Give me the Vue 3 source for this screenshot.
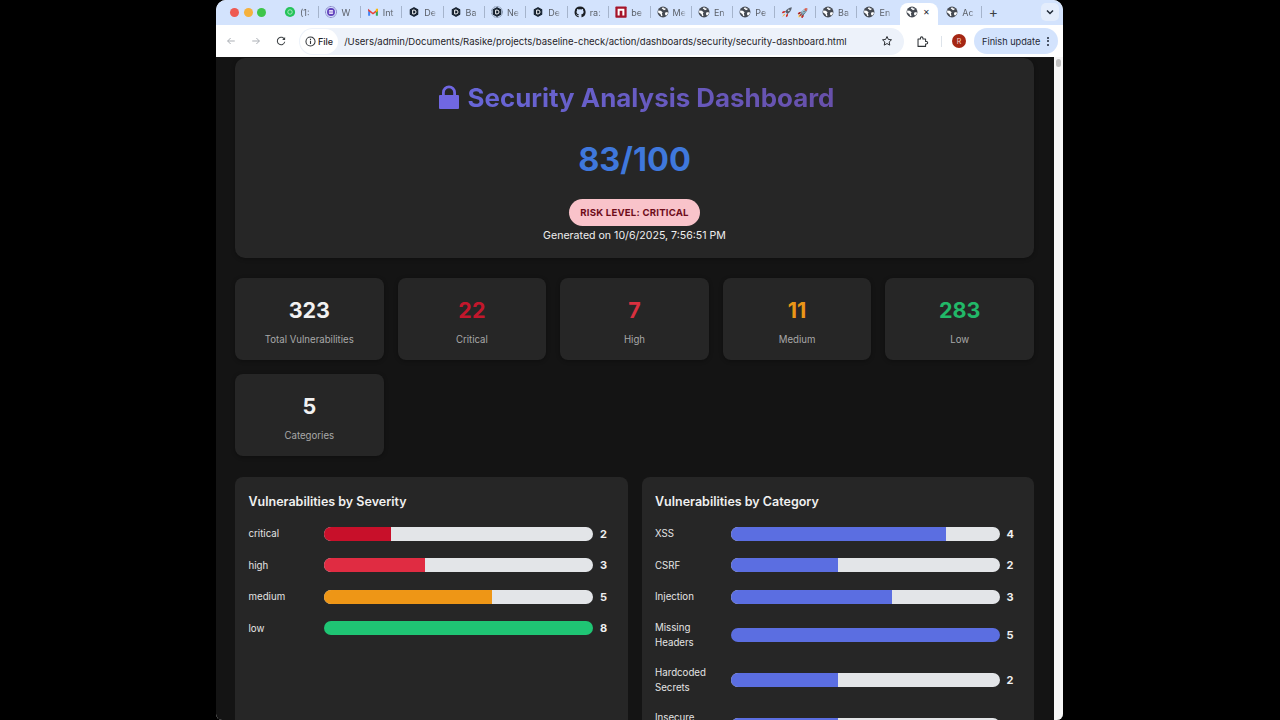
<template>
  <div class="screen">
    <div class="window">
      <!-- Tab strip -->
      <div class="tabstrip">
        <div class="lights">
          <span class="light light--red"></span>
          <span class="light light--yellow"></span>
          <span class="light light--green"></span>
        </div>
        <div class="tabs">
          <div v-for="(tab, i) in tabs" :key="i" class="tab" :class="{ 'tab--active': tab.active }">
            <svg class="favicon" viewBox="0 0 16 16">
              <template v-if="tab.icon === 'whatsapp'">
                <circle cx="8" cy="8" r="6.8" fill="#25c35a" />
                <circle cx="8" cy="8" r="3" fill="none" stroke="#c8f2d6" stroke-width="1" />
              </template>
              <template v-else-if="tab.icon === 'purple'">
                <circle cx="8" cy="8" r="7.300" fill="none" stroke="#4d3a9c" stroke-width="1" stroke-dasharray="1.200 0.700" />
                <circle cx="8" cy="8" r="5.300" fill="#5f3fbb" />
                <rect x="5.200" y="5.200" width="5.600" height="5.600" rx="1" fill="#e4dcf8" />
                <path d="M5.200 8h5.600" stroke="#5f3fbb" stroke-width="0.800" />
              </template>
              <template v-else-if="tab.icon === 'gmail'">
                <path d="M1.500 3.500v9.500h2.700V7.200z" fill="#4285f4" />
                <path d="M14.500 3.500v9.500h-2.700V7.200z" fill="#34a853" />
                <path d="M1.500 3.500L8 9l6.500-5.500v3L8 11.400 1.500 6.500z" fill="#ea4335" />
                <path d="M11.800 3.600l2.700-.1v3l-2.700 2z" fill="#fbbc04" />
              </template>
              <template v-else-if="tab.icon === 'dark' || tab.icon === 'darkring'">
                <circle v-if="tab.icon === 'darkring'" cx="8" cy="8" r="7.400" fill="none" stroke="#44546a" stroke-width="0.900" stroke-dasharray="1.200 0.800" />
                <path d="M8 2.200L13 5v6l-5 2.800L3 11V5z" fill="#14202e" stroke="#14202e" stroke-width="1.400" stroke-linejoin="round" />
                <path d="M6.200 5.400h1.900a2.600 2.600 0 010 5.200H6.200z" fill="none" stroke="#fff" stroke-width="1.300" />
              </template>
              <template v-else-if="tab.icon === 'github'">
                <path d="M8 .8a7.300 7.300 0 00-2.300 14.200c.4.100.5-.2.5-.4v-1.300c-2 .4-2.500-.9-2.500-.9-.3-.8-.8-1.100-.8-1.100-.7-.4 0-.4 0-.4.700 0 1.100.8 1.100.8.700 1.100 1.700.8 2.200.6 0-.5.300-.8.500-1-1.600-.2-3.300-.8-3.300-3.600 0-.8.300-1.400.8-1.900-.1-.2-.4-.9.100-1.900 0 0 .6-.2 2 .7a7 7 0 013.600 0c1.400-.9 2-.7 2-.7.400 1 .2 1.700.1 1.900.5.500.8 1.100.8 1.900 0 2.800-1.700 3.400-3.300 3.600.3.200.5.700.5 1.300v2c0 .2.100.5.5.4A7.300 7.300 0 008 .8z" fill="#1b1f24" />
              </template>
              <template v-else-if="tab.icon === 'red'">
                <rect x="0.500" y="0.500" width="15" height="15" rx="1" fill="#a5142a" />
                <path d="M3.500 12.500v-9h9v9H9.800V6.200H6.200v6.300z" fill="#fff" />
              </template>
              <template v-else-if="tab.icon === 'rocket'">
                <path d="M14.500 1.500C10.500 2 7.500 4 5.500 7.500l3 3c3.500-2 5.500-5 6-9z" fill="#59606b" />
                <circle cx="10.300" cy="5.700" r="1.200" fill="#d9dee5" />
                <path d="M6 6.500l-3.500.5L1 9.500l3.500-.3zM9.500 10L9 13.500 6.500 15l.3-3.500z" fill="#cf2f2a" />
                <path d="M4.200 10.300L1.500 14.500l4.200-2.700z" fill="#f2b13c" />
              </template>
              <template v-else>
                <circle cx="8" cy="8" r="7.300" fill="#454a52" />
                <path d="M1.500 6l3.500.3 2.500 2-1 1.700.8 3-1.500.7-1.300-3L1.500 8.500zM8.200 1.200l.8 1.800 2.300.2.200 1.500-2.200 1L7.800 4.300 6.200 3.300zM11 8.800l3-.8.600 2-2.500 3-1.500-2z" fill="#fff" />
              </template>
            </svg>
            <span v-if="tab.label" class="tab__label">{{ tab.label }}</span>
            <span v-if="tab.active" class="tab__close">✕</span>
          </div>
          <span class="tab-plus">+</span>
        </div>
        <div class="tab-menu">
          <svg viewBox="0 0 10 10" width="10" height="10"><path d="M2 3.500l3 3 3-3" fill="none" stroke="#1f2937" stroke-width="1.500" /></svg>
        </div>
      </div>

      <!-- Toolbar -->
      <div class="toolbar">
        <svg class="nav-icon" viewBox="0 0 16 16"><path d="M13 8H3.500M7.500 4l-4 4 4 4" fill="none" stroke="#a9adb3" stroke-width="1.300" /></svg>
        <svg class="nav-icon" viewBox="0 0 16 16"><path d="M3 8h9.500M8.500 4l4 4-4 4" fill="none" stroke="#a9adb3" stroke-width="1.300" /></svg>
        <svg class="nav-icon nav-icon--reload" viewBox="0 0 16 16"><path d="M12.800 6.200A5 5 0 1013 9" fill="none" stroke="#3c4043" stroke-width="1.400" /><path d="M13.500 2.800v4h-4z" fill="#3c4043" /></svg>
        <div class="omnibox">
          <div class="chip">
            <svg viewBox="0 0 14 14" width="11" height="11"><circle cx="7" cy="7" r="5.800" fill="none" stroke="#303438" stroke-width="1.300" /><path d="M7 6.200v4M7 3.600v1.500" stroke="#303438" stroke-width="1.400" /></svg>
            <span>File</span>
          </div>
          <span class="url">/Users/admin/Documents/Rasike/projects/baseline-check/action/dashboards/security/security-dashboard.html</span>
          <svg class="star" viewBox="0 0 16 16"><path d="M8 2l1.800 3.900 4.200.5-3.100 2.900.8 4.200L8 11.400 4.300 13.500l.8-4.200L2 6.400l4.200-.5z" fill="none" stroke="#26292d" stroke-width="1.300" stroke-linejoin="round" /></svg>
        </div>
        <svg class="puzzle" viewBox="0 0 16 16"><path d="M2.500 5h3V3.800a1.500 1.500 0 013 0V5h3.300v3h1.100a1.500 1.500 0 010 3h-1.100v3H2.500z" fill="none" stroke="#303438" stroke-width="1.300" stroke-linejoin="round" /></svg>
        <span class="divider"></span>
        <span class="avatar">R</span>
        <div class="update">
          <span>Finish update</span>
          <span class="update__dots"><i></i><i></i><i></i></span>
        </div>
      </div>

      <!-- Page -->
      <div class="viewport">
        <div class="page">
          <header class="hero">
            <h1 class="hero__title">
              <svg class="hero__lock" viewBox="0 0 20 24"><path d="M3 10V7.500a7 7 0 0114 0V10h-2.800V7.500a4.200 4.200 0 00-8.400 0V10z" fill="#7067e2" /><rect x="0" y="10" width="20" height="14" rx="1" fill="#7067e2" /></svg>
              <span class="hero__text">Security Analysis Dashboard</span>
            </h1>
            <div class="hero__score">83/100</div>
            <div class="hero__risk">RISK LEVEL: CRITICAL</div>
            <div class="hero__date">Generated on 10/6/2025, 7:56:51 PM</div>
          </header>

          <section class="stats">
            <div v-for="s in stats" :key="s.label" class="stat">
              <div class="stat__value" :class="s.cls">{{ s.value }}</div>
              <div class="stat__label">{{ s.label }}</div>
            </div>
          </section>

          <section class="charts">
            <div class="chart">
              <h3 class="chart__title">Vulnerabilities by Severity</h3>
              <div v-for="r in severity" :key="r.label" class="row">
                <span class="row__label">{{ r.label }}</span>
                <div class="row__track">
                  <div class="row__fill" :class="r.cls" :style="{ width: r.pct + '%' }"></div>
                </div>
                <span class="row__value">{{ r.value }}</span>
              </div>
            </div>
            <div class="chart">
              <h3 class="chart__title">Vulnerabilities by Category</h3>
              <div v-for="r in category" :key="r.label" class="row">
                <span class="row__label">{{ r.label }}</span>
                <div class="row__track">
                  <div class="row__fill fill-cat" :style="{ width: r.pct + '%' }"></div>
                </div>
                <span class="row__value">{{ r.value }}</span>
              </div>
            </div>
          </section>
        </div>
        <div class="scrollbar"><div class="scrollbar__thumb"></div></div>
      </div>
    </div>
  </div>
</template>

<script setup>
const tabs = [
  { icon: 'whatsapp', label: '(1:' },
  { icon: 'purple', label: 'W' },
  { icon: 'gmail', label: 'Int' },
  { icon: 'dark', label: 'De' },
  { icon: 'dark', label: 'Ba' },
  { icon: 'darkring', label: 'Ne' },
  { icon: 'dark', label: 'De' },
  { icon: 'github', label: 'ra:' },
  { icon: 'red', label: 'be' },
  { icon: 'globe', label: 'Me' },
  { icon: 'globe', label: 'En' },
  { icon: 'globe', label: 'Pe' },
  { icon: 'rocket', label: '🚀' },
  { icon: 'globe', label: 'Ba' },
  { icon: 'globe', label: 'En' },
  { icon: 'globe', label: '', active: true },
  { icon: 'globe', label: 'Ac' },
]

const stats = [
  { value: 323, label: 'Total Vulnerabilities', cls: '' },
  { value: 22, label: 'Critical', cls: 'c-critical' },
  { value: 7, label: 'High', cls: 'c-high' },
  { value: 11, label: 'Medium', cls: 'c-medium' },
  { value: 283, label: 'Low', cls: 'c-low' },
  { value: 5, label: 'Categories', cls: '' },
]

const severity = [
  { label: 'critical', value: 2, pct: 25, cls: 'fill-critical' },
  { label: 'high', value: 3, pct: 37.5, cls: 'fill-high' },
  { label: 'medium', value: 5, pct: 62.5, cls: 'fill-medium' },
  { label: 'low', value: 8, pct: 100, cls: 'fill-low' },
]

const category = [
  { label: 'XSS', value: 4, pct: 80 },
  { label: 'CSRF', value: 2, pct: 40 },
  { label: 'Injection', value: 3, pct: 60 },
  { label: 'Missing Headers', value: 5, pct: 100 },
  { label: 'Hardcoded Secrets', value: 2, pct: 40 },
  { label: 'Insecure Storage', value: 2, pct: 40 },
]
</script>

<style>
html, body { margin: 0; background: #000; overflow: hidden; }
</style>

<style scoped>
.screen {
  width: 1280px;
  height: 720px;
  background: #000;
  display: flex;
  justify-content: center;
  font-family: Inter, "Liberation Sans", sans-serif;
  overflow: hidden;
}
.window {
  width: 847px;
  margin-left: -1px;
  height: 720px;
  display: flex;
  flex-direction: column;
  border-radius: 10px 10px 6px 6px;
  overflow: hidden;
  background: #fff;
}

/* ── Tab strip ─────────────────────────────────── */
.tabstrip {
  height: 25px;
  flex-shrink: 0;
  background: #d3e3fd;
  display: flex;
  align-items: flex-start;
  padding-left: 14px;
}
.lights { display: flex; gap: 4.500px; padding-top: 7.500px; width: 48px; flex-shrink: 0; }
.light { width: 9px; height: 9px; border-radius: 50%; }
.light--red { background: #ee5a52; }
.light--yellow { background: #f5b13d; }
.light--green { background: #3ec54a; }
.tabs { display: flex; align-items: flex-start; margin-top: 3px; }
.tab {
  width: 41.400px;
  height: 22px;
  display: flex;
  align-items: center;
  gap: 4px;
  padding: 0 0 4px 6px;
  box-sizing: border-box;
  position: relative;
  font-size: 9px;
  color: #5b6068;
  white-space: nowrap;
  flex-shrink: 0;
}
.tab::after {
  content: "";
  position: absolute;
  right: 0;
  top: 3px;
  height: 12px;
  width: 1px;
  background: #a5b4cc;
}
.tab:nth-child(15)::after, .tab--active::after { display: none; }
.tab--active {
  width: 38px;
  margin: 0 2.400px 0 1px;
  background: #fff;
  border-radius: 8px 8px 0 0;
  gap: 5px;
}
.favicon { width: 12px; height: 12px; flex-shrink: 0; }
.tab__label {
  width: 13px;
  overflow: hidden;
  -webkit-mask-image: linear-gradient(90deg, #000 60%, transparent);
  mask-image: linear-gradient(90deg, #000 60%, transparent);
}
.tab__close { font-size: 8px; color: #1f2937; }
.tab-plus { font-size: 14px; color: #3c4043; margin-left: 7px; line-height: 18px; }
.tab-menu {
  margin-left: auto;
  margin-right: 4px;
  margin-top: 3px;
  width: 18px;
  height: 18px;
  background: #e4edfc;
  border-radius: 5px;
  display: flex;
  align-items: center;
  justify-content: center;
}

/* ── Toolbar ───────────────────────────────────── */
.toolbar {
  height: 32px;
  flex-shrink: 0;
  background: #fff;
  display: flex;
  align-items: center;
  padding: 0 4px 0 9px;
  box-sizing: border-box;
}
.nav-icon { width: 12px; height: 12px; margin-right: 13px; flex-shrink: 0; }
.nav-icon--reload { margin-right: 12px; }
.omnibox {
  width: 605px;
  height: 27px;
  border-radius: 14px;
  background: #edf2fa;
  display: flex;
  align-items: center;
  box-sizing: border-box;
  flex-shrink: 0;
}
.chip {
  height: 25px;
  background: #fff;
  border-radius: 13px;
  margin-left: 1px;
  display: flex;
  align-items: center;
  gap: 2px;
  padding: 0 5px 0 5px;
  font-size: 9px;
  font-weight: 500;
  color: #1f2328;
}
.url { font-size: 9.550px; color: #1f2328; margin-left: 6px; white-space: nowrap; }
.star { width: 12px; height: 12px; margin-left: auto; margin-right: 11px; flex-shrink: 0; }
.puzzle { width: 13px; height: 13px; margin-left: 12px; flex-shrink: 0; }
.divider { width: 1px; height: 11px; background: #dde3ea; margin-left: 12px; }
.avatar {
  width: 14px;
  height: 14px;
  margin-left: 10px;
  border-radius: 50%;
  background: #a52714;
  color: #f8d8cf;
  font-size: 7px;
  display: flex;
  align-items: center;
  justify-content: center;
  flex-shrink: 0;
}
.update {
  height: 26px;
  margin-left: 8px;
  padding: 0 9px 0 8px;
  border-radius: 13px;
  background: #d3e3fd;
  display: flex;
  align-items: center;
  gap: 7px;
  font-size: 9.200px;
  color: #1f2937;
  white-space: nowrap;
}
.update__dots { display: flex; flex-direction: column; gap: 1.500px; }
.update__dots i { width: 2px; height: 2px; border-radius: 50%; background: #1f2937; }

/* ── Page ──────────────────────────────────────── */
.viewport {
  flex: 1;
  min-height: 0;
  display: flex;
  overflow: hidden;
  background: #141414;
}
.page {
  flex: 1;
  min-width: 0;
  box-sizing: border-box;
  padding: 1px 20px 0 19px;
}
.scrollbar {
  width: 9px;
  flex-shrink: 0;
  background: #f7f7f7;
  position: relative;
}
.scrollbar__thumb {
  position: absolute;
  top: 2px;
  left: 2px;
  width: 5px;
  height: 8px;
  border-radius: 3px;
  background: #c1c1c1;
}

.hero {
  height: 200px;
  box-sizing: border-box;
  padding-top: 23px;
  background: #262626;
  border-radius: 10px;
  box-shadow: 0 1px 4px rgba(0, 0, 0, 0.3);
  display: flex;
  flex-direction: column;
  align-items: center;
  margin-bottom: 20px;
}
.hero__title {
  margin: 0;
  padding-left: 4px;
  display: flex;
  align-items: center;
  gap: 9px;
  font-size: 25.900px;
  line-height: 34px;
  font-weight: 700;
}
.hero__lock { width: 20px; height: 24px; flex-shrink: 0; margin-top: -3px; }
.hero__text {
  background: linear-gradient(90deg, #6866d8, #6750aa);
  -webkit-background-clip: text;
  background-clip: text;
  color: transparent;
}
.hero__score {
  margin-top: 25px;
  font-size: 32.500px;
  line-height: 40px;
  font-weight: 700;
  color: #3f78dc;
}
.hero__risk {
  margin-top: 19px;
  height: 27px;
  padding: 0 11px;
  border-radius: 14px;
  background: #f9c3ca;
  color: #6e0d1a;
  font-size: 9.650px;
  font-weight: 700;
  letter-spacing: 0.2px;
  display: flex;
  align-items: center;
}
.hero__date { margin-top: 2px; font-size: 10.600px; line-height: 15px; color: #efefef; }

.stats {
  display: grid;
  grid-template-columns: repeat(5, 1fr);
  gap: 14px;
  margin-bottom: 21px;
}
.stat {
  height: 82px;
  box-sizing: border-box;
  padding-top: 19px;
  background: #262626;
  border-radius: 8px;
  box-shadow: 0 1px 4px rgba(0, 0, 0, 0.3);
  text-align: center;
}
.stat__value { font-size: 21.500px; line-height: 26px; font-weight: 700; color: #f1f1f1; }
.stat__label { margin-top: 10px; font-size: 9.650px; line-height: 14px; color: #a8a8a8; }
.c-critical { color: #c3172c; }
.c-high { color: #d9303f; }
.c-medium { color: #ea9617; }
.c-low { color: #22b868; }

.charts {
  display: grid;
  grid-template-columns: 1fr 1fr;
  gap: 14px;
}
.chart {
  height: 400px;
  box-sizing: border-box;
  padding: 16px 14px 0 13.500px;
  background: #262626;
  border-radius: 8px;
}
.chart__title {
  margin: 0 0 11px;
  font-size: 12.500px;
  line-height: 18px;
  font-weight: 600;
  color: #f0f0f0;
}
.row {
  display: flex;
  align-items: center;
  margin-bottom: 8px;
  min-height: 23.500px;
}
.row__label {
  width: 75.500px;
  flex-shrink: 0;
  padding: 3px 12px 3px 0;
  box-sizing: border-box;
  font-size: 9.700px;
  line-height: 15.500px;
  color: #e4e4e4;
}
.row__track {
  width: 269px;
  height: 14px;
  flex-shrink: 0;
  border-radius: 7px;
  background: #e3e5e8;
  overflow: hidden;
}
.row__fill { height: 100%; }
.row__value { margin-left: 7px; font-size: 11px; font-weight: 700; color: #efefef; }
.fill-critical { background: #c8102a; }
.fill-high { background: #e02c42; }
.fill-medium { background: #ee9616; }
.fill-low { background: #1fc574; }
.fill-cat { background: #5b6ee1; }
</style>
